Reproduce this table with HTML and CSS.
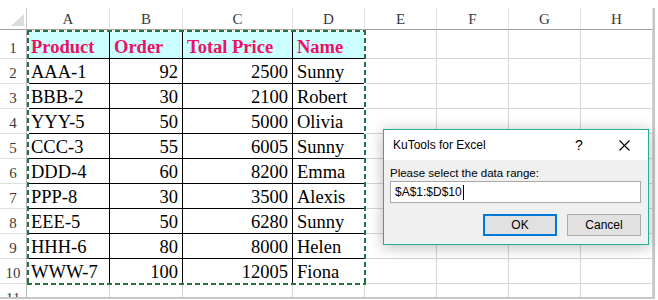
FILE: index.html
```html
<!DOCTYPE html>
<html>
<head>
<meta charset="utf-8">
<link rel="stylesheet" href="styles.css">
</head>
<body>
<div class="app">
  <div class="sheet">
    <div class="grid">
      <div class="corner"><span class="tri"></span></div>
      <div class="ch">A</div><div class="ch">B</div><div class="ch">C</div><div class="ch">D</div><div class="ch">E</div><div class="ch">F</div><div class="ch">G</div><div class="ch">H</div>

      <div class="rh">1</div>
      <div class="d h">Product</div><div class="d h">Order</div><div class="d h">Total Price</div><div class="d h">Name</div>
      <div class="c"></div><div class="c"></div><div class="c"></div><div class="c"></div>

      <div class="rh">2</div>
      <div class="d">AAA-1</div><div class="d n">92</div><div class="d n">2500</div><div class="d">Sunny</div>
      <div class="c"></div><div class="c"></div><div class="c"></div><div class="c"></div>

      <div class="rh">3</div>
      <div class="d">BBB-2</div><div class="d n">30</div><div class="d n">2100</div><div class="d">Robert</div>
      <div class="c"></div><div class="c"></div><div class="c"></div><div class="c"></div>

      <div class="rh">4</div>
      <div class="d">YYY-5</div><div class="d n">50</div><div class="d n">5000</div><div class="d">Olivia</div>
      <div class="c"></div><div class="c"></div><div class="c"></div><div class="c"></div>

      <div class="rh">5</div>
      <div class="d">CCC-3</div><div class="d n">55</div><div class="d n">6005</div><div class="d">Sunny</div>
      <div class="c"></div><div class="c"></div><div class="c"></div><div class="c"></div>

      <div class="rh">6</div>
      <div class="d">DDD-4</div><div class="d n">60</div><div class="d n">8200</div><div class="d">Emma</div>
      <div class="c"></div><div class="c"></div><div class="c"></div><div class="c"></div>

      <div class="rh">7</div>
      <div class="d">PPP-8</div><div class="d n">30</div><div class="d n">3500</div><div class="d">Alexis</div>
      <div class="c"></div><div class="c"></div><div class="c"></div><div class="c"></div>

      <div class="rh">8</div>
      <div class="d">EEE-5</div><div class="d n">50</div><div class="d n">6280</div><div class="d">Sunny</div>
      <div class="c"></div><div class="c"></div><div class="c"></div><div class="c"></div>

      <div class="rh">9</div>
      <div class="d">HHH-6</div><div class="d n">80</div><div class="d n">8000</div><div class="d">Helen</div>
      <div class="c"></div><div class="c"></div><div class="c"></div><div class="c"></div>

      <div class="rh">10</div>
      <div class="d">WWW-7</div><div class="d n">100</div><div class="d n">12005</div><div class="d">Fiona</div>
      <div class="c"></div><div class="c"></div><div class="c"></div><div class="c"></div>

      <div class="rh">11</div>
      <div class="c"></div><div class="c"></div><div class="c"></div><div class="c"></div>
      <div class="c"></div><div class="c"></div><div class="c"></div><div class="c"></div>
    </div>
    <div class="ants"></div>
  </div>

  <div class="dialog">
    <div class="titlebar">
      <span class="title">KuTools for Excel</span>
      <span class="help">?</span>
      <svg class="close" width="11" height="11" viewBox="0 0 11 11"><path d="M0.5 0.5 L10.5 10.5 M10.5 0.5 L0.5 10.5" stroke="#000" stroke-width="1.1" fill="none"/></svg>
    </div>
    <div class="dbody">
      <div class="label">Please select the data range:</div>
      <div class="input">$A$1:$D$10<span class="caret"></span></div>
      <div class="buttons">
        <div class="btn ok">OK</div>
        <div class="btn">Cancel</div>
      </div>
    </div>
  </div>
</div>
</body>
</html>
```

FILE: styles.css
```css
html, body {
  margin: 0;
  padding: 0;
  background: #fff;
}
.app {
  position: relative;
  width: 658px;
  height: 300px;
  overflow: hidden;
}
.sheet {
  position: relative;
  margin-top: 8px;
  width: 653px;
  height: 289px;
  overflow: hidden;
  border-right: 2px solid #c6c6c6;
  border-bottom: 2px solid #c6c6c6;
}
.grid {
  display: grid;
  grid-template-columns: 27px 83px 73px 110px 72px 72px 72px 72px 72px;
  grid-template-rows: 22px 29px repeat(10, 25px);
  font-family: "Liberation Serif", "Times New Roman", serif;
}
.grid > div {
  box-sizing: border-box;
  border-right: 1px solid #d4d4d4;
  border-bottom: 1px solid #d4d4d4;
  overflow: hidden;
  white-space: nowrap;
}
.corner {
  display: flex;
  justify-content: flex-end;
  align-items: flex-end;
  padding: 0 2px 3px 0;
  border-bottom-color: #a0a0a0 !important;
  border-right-color: #c8c8c8 !important;
}
.tri {
  width: 13px;
  height: 12px;
  background: #dcdcdc;
  clip-path: polygon(100% 0, 100% 100%, 0 100%);
}
.ch {
  display: flex;
  align-items: center;
  justify-content: center;
  font-size: 15px;
  color: #3a3a3a;
  padding-top: 2px;
  border-right-color: #e2e2e2 !important;
  border-bottom-color: #9f9f9f !important;
}
.rh {
  display: flex;
  align-items: flex-end;
  justify-content: center;
  font-size: 15px;
  color: #3a3a3a;
  padding-bottom: 1px;
  border-right-color: #b8b8b8 !important;
  border-bottom-color: #e0e0e0 !important;
}
.c, .d {
  display: flex;
  align-items: flex-end;
  font-size: 18.5px;
  line-height: 21px;
  color: #000;
  padding: 0 4px 0 4px;
}
.d {
  border-right-color: #000 !important;
  border-bottom-color: #000 !important;
}
.n {
  justify-content: flex-end;
}
.h {
  background: #ccffff;
  color: #ee1166;
  font-weight: bold;
}
.ants {
  position: absolute;
  left: 27px;
  top: 22px;
  width: 339px;
  height: 255px;
  background:
    repeating-linear-gradient(90deg, #217346 0 5px, #ffffff 5px 8px) left top / 100% 2px no-repeat,
    repeating-linear-gradient(90deg, #217346 0 5px, #ffffff 5px 8px) left bottom / 100% 2px no-repeat,
    repeating-linear-gradient(180deg, #217346 0 5px, #ffffff 5px 8px) left top / 2px 100% no-repeat,
    repeating-linear-gradient(180deg, #217346 0 5px, #ffffff 5px 8px) right top / 2px 100% no-repeat;
}
.dialog {
  position: absolute;
  left: 383px;
  top: 129px;
  width: 266px;
  height: 116px;
  box-sizing: border-box;
  border: 1px solid #22b095;
  background: #f0f0f0;
  box-shadow: 0 2px 14px rgba(0, 0, 0, 0.28);
  font-family: "Liberation Sans", Arial, sans-serif;
  font-size: 11.5px;
  color: #000;
  display: flex;
  flex-direction: column;
}
.titlebar {
  height: 30px;
  background: #fff;
  display: flex;
  align-items: center;
  padding-left: 9px;
  font-size: 12px;
}
.title {
  flex: 1;
}
.help {
  font-size: 14px;
  width: 12px;
  text-align: center;
  margin-right: 34px;
}
.close {
  margin-right: 18px;
}
.dbody {
  padding: 6px 7px 0 6px;
  display: flex;
  flex-direction: column;
}
.label {
  line-height: 14px;
}
.input {
  margin-top: 1px;
  height: 22px;
  box-sizing: border-box;
  background: #fff;
  border: 1px solid #a9a9a9;
  display: flex;
  align-items: center;
  padding-left: 4px;
  font-size: 12px;
}
.caret {
  width: 1px;
  height: 15px;
  background: #000;
  margin-left: 1px;
}
.buttons {
  margin-top: 11px;
  display: flex;
  justify-content: flex-end;
  gap: 10px;
}
.btn {
  width: 74px;
  height: 22px;
  box-sizing: border-box;
  background: #e1e1e1;
  border: 1px solid #adadad;
  display: flex;
  align-items: center;
  justify-content: center;
  font-size: 12px;
}
.btn.ok {
  border: 2px solid #0078d7;
}
```
